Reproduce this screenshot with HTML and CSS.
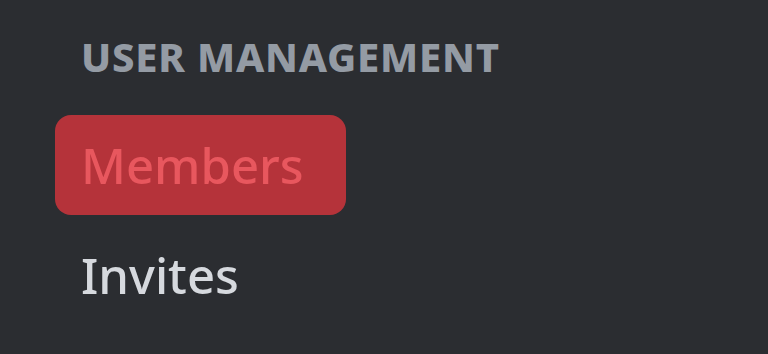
FILE: index.html
```html
<!DOCTYPE html>
<html lang="en">
<head>
    <meta charset="UTF-8">
    <title>User Management</title>
    <link rel="stylesheet" href="styles.css">
</head>
<body>
    <nav class="sidebar">
        <div class="section-title">User Management</div>
        <div class="nav-item active">Members</div>
        <div class="nav-item">Invites</div>
    </nav>
</body>
</html>
```

FILE: styles.css
```css
* {
    margin: 0;
    padding: 0;
    box-sizing: border-box;
}

body {
    background-color: #2b2d31;
    font-family: 'Noto Sans', sans-serif;
    overflow: hidden;
    width: 768px;
    height: 354px;
}

.sidebar {
    display: flex;
    flex-direction: column;
    padding: 29px 0 0 55px;
}

.section-title {
    padding-left: 26px;
    font-size: 40px;
    font-weight: 800;
    text-transform: uppercase;
    color: #949ba4;
    letter-spacing: 0.8px;
    margin-bottom: 31px;
}

.nav-item {
    width: 291px;
    height: 100px;
    padding-left: 26px;
    display: flex;
    align-items: center;
    border-radius: 16px;
    font-size: 49px;
    font-weight: 500;
    color: #d6d9de;
    margin-bottom: 10px;
}

.nav-item.active {
    background-color: #b5333a;
    color: #e8575e;
}
```
